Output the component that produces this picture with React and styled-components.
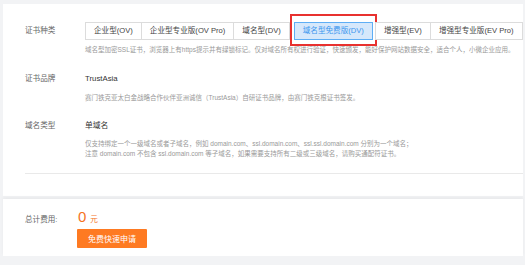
import styled, { createGlobalStyle } from "styled-components";

const GlobalStyle = createGlobalStyle`
    body {
        margin: 0;
        background: #f2f3f5;
        font-family: "Liberation Sans", "Noto Sans CJK SC", sans-serif;
    }
`;

const tabs = [
    { name: "企业型(OV)" },
    { name: "企业型专业版(OV Pro)" },
    { name: "域名型(DV)" },
    { name: "域名型免费版(DV)", active: true },
    { name: "增强型(EV)" },
    { name: "增强型专业版(EV Pro)" },
];

export default function App() {
    return (
        <>
            <GlobalStyle />
            <PageStl>
                <PanelStl>
                    <FieldStl>
                        <LabelStl $tall>证书种类</LabelStl>
                        <div>
                            <TabsStl>
                                {tabs.map((t) => (
                                    <TabStl key={t.name} $active={t.active}>
                                        {t.name}
                                    </TabStl>
                                ))}
                            </TabsStl>
                            <DescStl $top={5}>
                                域名型加密SSL证书，浏览器上有https提示并有绿锁标记。仅对域名所有权进行验证，快速颁发，能好保护网站数据安全，适合个人，小微企业应用。
                            </DescStl>
                        </div>
                    </FieldStl>

                    <FieldStl $top={18}>
                        <LabelStl>证书品牌</LabelStl>
                        <div>
                            <ValueStl>TrustAsia</ValueStl>
                            <DescStl $top={8}>
                                赛门铁克亚太白金战略合作伙伴亚洲诚信（TrustAsia）自研证书品牌，由赛门铁克根证书签发。
                            </DescStl>
                        </div>
                    </FieldStl>

                    <FieldStl $top={17}>
                        <LabelStl>域名类型</LabelStl>
                        <div>
                            <ValueStl>单域名</ValueStl>
                            <DescStl $top={7}>
                                仅支持绑定一个一级域名或者子域名，例如 domain.com、ssl.domain.com、ssl.ssl.domain.com 分别为一个域名；
                                <br />
                                注意 domain.com 不包含 ssl.domain.com 等子域名，如果需要支持所有二级或三级域名，请购买通配符证书。
                            </DescStl>
                        </div>
                    </FieldStl>

                    <DividerStl />
                </PanelStl>

                <FooterStl>
                    <PriceRowStl>
                        <FooterLabelStl>总计费用:</FooterLabelStl>
                        <PriceStl>0</PriceStl>
                        <UnitStl>元</UnitStl>
                    </PriceRowStl>
                    <ApplyBtnStl>免费快速申请</ApplyBtnStl>
                </FooterStl>
            </PageStl>
        </>
    );
}

const PageStl = styled.div`
    padding: 4px 2px 0 3px;
`;

const PanelStl = styled.div`
    background: #fff;
    height: 192px;
    overflow: hidden;
    padding: 18px 0 0 22px;
    box-sizing: border-box;
`;

const FieldStl = styled.div`
    display: grid;
    grid-template-columns: 60px 1fr;
    margin-top: ${(p) => p.$top || 0}px;
`;

const LabelStl = styled.div`
    font-size: 7.6px;
    color: #666;
    line-height: ${(p) => (p.$tall ? "18px" : "12px")};
`;

const ValueStl = styled.div`
    font-size: 7.8px;
    color: #333;
    line-height: 12px;
`;

const DescStl = styled.div`
    font-size: 6.5px;
    color: #999;
    line-height: 10px;
    margin-top: ${(p) => p.$top}px;
    white-space: nowrap;
`;

const TabsStl = styled.div`
    display: flex;
    align-items: center;
`;

const TabStl = styled.span`
    position: relative;
    box-sizing: border-box;
    height: 18px;
    line-height: 16px;
    padding: 0 8px;
    font-size: 7.6px;
    white-space: nowrap;
    color: ${(p) => (p.$active ? "#3b96ee" : "#444")};
    background: ${(p) => (p.$active ? "#d6e8fb" : "#fff")};
    border: 1px solid ${(p) => (p.$active ? "#5eaef5" : "#dcdcdc")};
    margin: ${(p) => (p.$active ? "0 3px 0 4px" : "0 0 0 -1px")};
    &:first-child {
        margin-left: 0;
    }
    ${(p) =>
        p.$active &&
        `
        &::after {
            content: "";
            position: absolute;
            top: -9px;
            bottom: -7px;
            left: -5px;
            right: -5px;
            border: 2px solid #e8312f;
        }
    `}
`;

const DividerStl = styled.div`
    height: 1px;
    background: #e9e9e9;
    margin-top: 14px;
`;

const FooterStl = styled.div`
    margin-top: 3px;
    background: #fff;
    height: 57px;
    padding: 9px 0 0 22px;
    box-sizing: border-box;
    box-shadow: 0 -2px 3px rgba(0, 0, 0, 0.04);
`;

const PriceRowStl = styled.div`
    display: flex;
    align-items: baseline;
    height: 18px;
    line-height: 18px;
`;

const FooterLabelStl = styled.span`
    width: 53px;
    font-size: 7.6px;
    color: #666;
`;

const PriceStl = styled.span`
    font-size: 15px;
    color: #f5731f;
`;

const UnitStl = styled.span`
    font-size: 7.6px;
    color: #f5731f;
    margin-left: 4px;
`;

const ApplyBtnStl = styled.button`
    display: block;
    margin: 3px 0 0 52px;
    width: 70px;
    height: 19px;
    padding: 0;
    border: none;
    border-radius: 1px;
    background: #fe7a22;
    color: #fff;
    font-family: inherit;
    font-size: 8px;
`;
